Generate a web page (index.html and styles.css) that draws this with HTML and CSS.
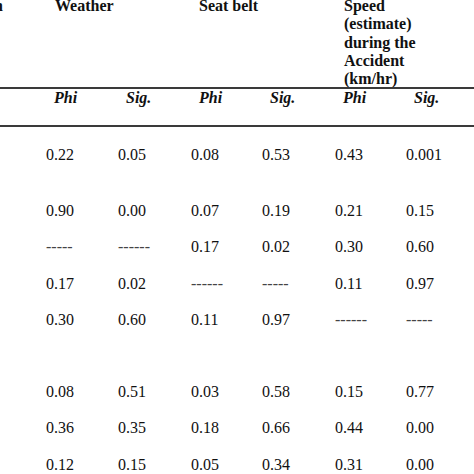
FILE: index.html
```html
<!DOCTYPE html>
<html>
<head>
<meta charset="utf-8">
<link rel="stylesheet" href="styles.css">
</head>
<body>
<div class="table">
  <div class="head">
    <div class="label"><span class="cut">n</span></div>
    <div class="group g1">Weather</div>
    <div class="group g2">Seat belt</div>
    <div class="group g3">Speed<br>(estimate)<br>during the<br>Accident<br>(km/hr)</div>
  </div>
  <div class="sub">
    <div></div>
    <div class="sh">Phi</div><div class="sh">Sig.</div>
    <div class="sh">Phi</div><div class="sh">Sig.</div>
    <div class="sh">Phi</div><div class="sh">Sig.</div>
  </div>
  <div class="body">
    <div class="row gap-a"><div></div><div>0.22</div><div>0.05</div><div>0.08</div><div>0.53</div><div>0.43</div><div>0.001</div></div>
    <div class="row"><div></div><div>0.90</div><div>0.00</div><div>0.07</div><div>0.19</div><div>0.21</div><div>0.15</div></div>
    <div class="row"><div></div><div class="dash">-----</div><div class="dash">------</div><div>0.17</div><div>0.02</div><div>0.30</div><div>0.60</div></div>
    <div class="row"><div></div><div>0.17</div><div>0.02</div><div class="dash">------</div><div class="dash">-----</div><div>0.11</div><div>0.97</div></div>
    <div class="row gap-b"><div></div><div>0.30</div><div>0.60</div><div>0.11</div><div>0.97</div><div class="dash">------</div><div class="dash">-----</div></div>
    <div class="row"><div></div><div>0.08</div><div>0.51</div><div>0.03</div><div>0.58</div><div>0.15</div><div>0.77</div></div>
    <div class="row"><div></div><div>0.36</div><div>0.35</div><div>0.18</div><div>0.66</div><div>0.44</div><div>0.00</div></div>
    <div class="row"><div></div><div>0.12</div><div>0.15</div><div>0.05</div><div>0.34</div><div>0.31</div><div>0.00</div></div>
  </div>
</div>
</body>
</html>
```

FILE: styles.css
```css
html, body {
  margin: 0;
  padding: 0;
  background: #fff;
  overflow: hidden;
}
body {
  width: 474px;
  height: 474px;
  font-family: "Liberation Serif", "Times New Roman", serif;
  font-size: 16px;
  color: #111;
}
.table {
  width: 474px;
}
.head, .sub, .row {
  display: grid;
  grid-template-columns: 46px 72px 73px 71px 73px 71px 68px;
}
.head {
  height: 87px;
  font-weight: bold;
  line-height: 18.25px;
}
.head > div {
  margin-top: -3px;
}
.label {
  grid-column: 1;
}
.cut {
  display: inline-block;
  margin-left: -6px;
}
.g1 { grid-column: 2 / span 2; padding-left: 9px; }
.g2 { grid-column: 4 / span 2; padding-left: 8px; }
.g3 { grid-column: 6 / span 2; padding-left: 9px; }
.sub {
  border-top: 2px solid #3a3a3a;
  border-bottom: 2px solid #3a3a3a;
  height: 36px;
  line-height: 17px;
  font-weight: bold;
  font-style: italic;
}
.sh {
  padding-left: 8px;
}
.body {
  padding-top: 10px;
}
.row {
  height: 36.5px;
  align-items: center;
  line-height: 18px;
}
.gap-a { margin-bottom: 19px; }
.gap-b { margin-bottom: 35px; }
.dash {
  color: #444;
}
```
